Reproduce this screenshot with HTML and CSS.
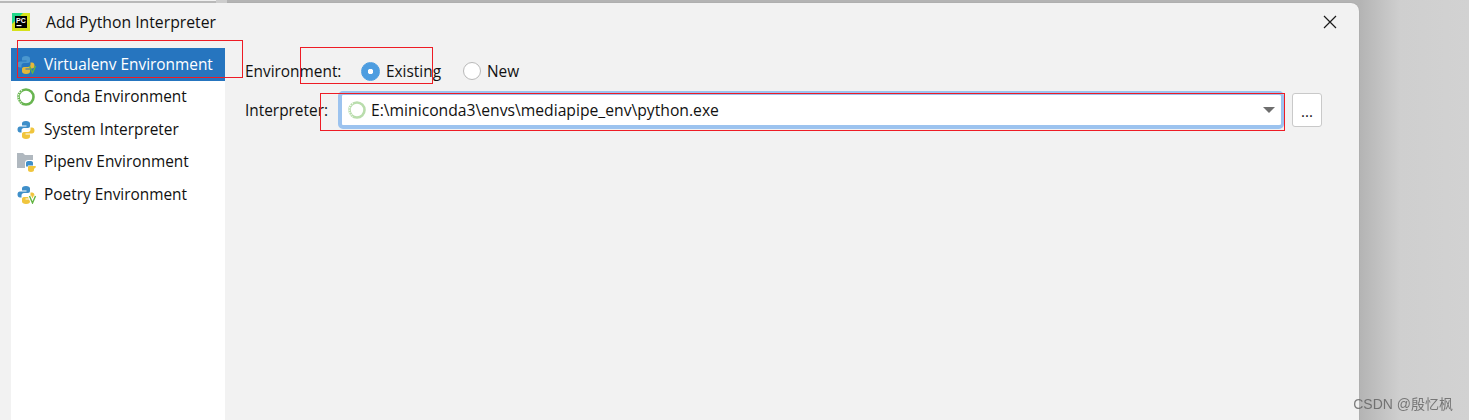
FILE: index.html
```html
<!DOCTYPE html>
<html>

<head>
    <meta charset="UTF-8">
    <title>Add Python Interpreter</title>
    <link rel="stylesheet" href="styles.css">
</head>

<body>
    <svg class="icon-defs">
        <defs>
            <path id="py-blue" d="M9 2C6 2 5 3 5 4.500V6.500H9.500V7.500H3C1.500 7.500 0.500 8.500 0.500 10.500C0.500 12.500 1.500 13.500 3 13.500H4.500V11.500C4.500 10 5.500 9 7 9H11C12.300 9 13 8 13 7V4.500C13 3 11.500 2 9 2Z"/>
            <path id="py-yellow" d="M9 20C12 20 13 19 13 17.500V15.500H8.500V14.500H15C16.500 14.500 17.500 13.500 17.500 11.500C17.500 9.500 16.500 8.500 15 8.500H13.500V10.500C13.500 12 12.500 13 11 13H7C5.700 13 5 14 5 15V17.500C5 19 6.500 20 9 20Z"/>
            <path id="venv-v" d="M12.500 12L15.500 19L18.500 12"/>
        </defs>
    </svg>

    <div class="backdrop">
        <div class="top-strip">
            <div class="strip-light"></div>
            <div class="strip-mid"></div>
        </div>
        <div class="dialog">
            <div class="title-bar">
                <svg class="app-icon" width="18" height="18" viewBox="0 0 18 18">
                    <rect width="18" height="18" fill="#d6e21c"/>
                    <path d="M0 0H11L0 11Z" fill="#21d789"/>
                    <rect x="3" y="3" width="12" height="12" fill="#000"/>
                    <rect x="4.500" y="12" width="5" height="1.200" fill="#fff"/>
                    <text x="4" y="9.500" class="app-icon-text">PC</text>
                </svg>
                <span class="title">Add Python Interpreter</span>
                <svg class="close" width="14" height="14" viewBox="0 0 14 14">
                    <path d="M1 1L13 13M13 1L1 13" stroke="#1a1a1a" stroke-width="1.200" fill="none"/>
                </svg>
            </div>
            <div class="content">
                <ul class="side">
                    <li class="side-item selected">
                        <svg class="icon" width="20" height="20" viewBox="0 0 20 20">
                            <use href="#py-blue" fill="#4a97cf"/>
                            <use href="#py-yellow" fill="#e2b93b"/>
                            <use href="#venv-v" stroke="#62b543" stroke-width="1.400" fill="none"/>
                        </svg>
                        Virtualenv Environment
                    </li>
                    <li class="side-item">
                        <svg class="icon" width="20" height="20" viewBox="0 0 20 20">
                            <circle cx="9" cy="10" r="7.500" stroke="#68b550" stroke-width="2.600" fill="none"/>
                            <path d="M5 3.500A7.500 7.500 0 0 0 5 16.500" stroke="#fff" stroke-width="1.400" stroke-dasharray="1 1.500" fill="none"/>
                        </svg>
                        Conda Environment
                    </li>
                    <li class="side-item">
                        <svg class="icon" width="20" height="20" viewBox="0 0 20 20">
                            <use href="#py-blue" fill="#3f8fc9"/>
                            <use href="#py-yellow" fill="#f0c53d"/>
                        </svg>
                        System Interpreter
                    </li>
                    <li class="side-item">
                        <svg class="icon" width="20" height="20" viewBox="0 0 20 20">
                            <path d="M0 1H6L8 3H16V8H11C9 8 8 9 8 11V16H0Z" fill="#b0b8bf"/>
                            <path d="M9 13V11C9 9.500 10 9 12.500 9S16 9.500 16 11V13.500H11V14.500H9Z" fill="#3f8fc9"/>
                            <path d="M12 14H18.500C19 14 19 16.500 17 16.500V18C17 19.300 16 20 14 20S11 19.300 11 18V15C11 14.500 11.500 14 12 14Z" fill="#f0c53d"/>
                        </svg>
                        Pipenv Environment
                    </li>
                    <li class="side-item">
                        <svg class="icon" width="20" height="20" viewBox="0 0 20 20">
                            <use href="#py-blue" fill="#3f8fc9"/>
                            <use href="#py-yellow" fill="#f0c53d"/>
                            <use href="#venv-v" stroke="#fff" stroke-width="3.400" fill="none"/>
                            <use href="#venv-v" stroke="#62b543" stroke-width="1.400" fill="none"/>
                        </svg>
                        Poetry Environment
                    </li>
                </ul>
                <div class="main">
                    <div class="env-row">
                        <span class="env-label">Environment:</span>
                        <span class="radio checked"></span>
                        <span class="radio-text">Existing</span>
                        <span class="radio"></span>
                        <span class="radio-text">New</span>
                    </div>
                    <div class="interp-row">
                        <span class="interp-label">Interpreter:</span>
                        <div class="combo">
                            <svg class="combo-icon" width="20" height="20" viewBox="0 0 20 20">
                                <circle cx="10" cy="10" r="7.500" stroke="#b9ddac" stroke-width="2.600" fill="none"/>
                                <path d="M6 3.500A7.500 7.500 0 0 0 6 16.500" stroke="#fff" stroke-width="1.400" stroke-dasharray="1 1.500" fill="none"/>
                            </svg>
                            <span class="combo-text">E:\miniconda3\envs\mediapipe_env\python.exe</span>
                            <span class="combo-arrow"></span>
                        </div>
                        <div class="browse">...</div>
                    </div>
                </div>
            </div>
        </div>
    </div>

    <div class="mark mark-side"></div>
    <div class="mark mark-env"></div>
    <div class="mark mark-combo"></div>
    <div class="watermark">CSDN @殷忆枫</div>
</body>

</html>
```

FILE: styles.css
```css
html,
body {
    margin: 0;
    height: 420px;
    overflow: hidden;
}

body {
    font-family: "Open Sans", "Noto Sans CJK SC", sans-serif;
    font-size: 15.4px;
    color: #111;
}

.icon-defs {
    display: none;
}

.backdrop {
    height: 420px;
    background: linear-gradient(to right, #b4b4b4 1360px, #cfcfcf 1400px, #d2d2d2);
}

.top-strip {
    display: flex;
    height: 3px;
}

.strip-light {
    width: 216px;
    background: #f0f0f0;
    border-bottom: 2px solid #b9b9b9;
    box-sizing: border-box;
}

.strip-mid {
    width: 11px;
    background: #cdcdcd;
}

.dialog {
    width: 1359px;
    height: 417px;
    background: #f2f2f2;
    border-top-right-radius: 8px;
    box-shadow: 0 0 1px #888;
}

.title-bar {
    display: flex;
    align-items: center;
    height: 37px;
    padding: 0 22px 0 12px;
}

.app-icon-text {
    font-family: "Liberation Sans", sans-serif;
    font-size: 7px;
    font-weight: bold;
    fill: #fff;
}

.title {
    margin-left: 16px;
    font-size: 15.75px;
}

.close {
    margin-left: auto;
}

.content {
    display: flex;
    height: 380px;
}

.side {
    list-style: none;
    margin: 8px 0 0 11px;
    padding: 0;
    width: 214px;
    background: #fff;
}

.side-item {
    display: flex;
    align-items: center;
    box-sizing: border-box;
    height: 32.5px;
    padding: 0 0 0.5px 6px;
}

.side-item.selected {
    background: #2675bf;
    color: #fff;
}

.icon {
    margin-right: 7px;
}

.main {
    flex: 1;
    padding: 15px 37px 0 20px;
}

.env-row {
    display: flex;
    align-items: center;
    height: 32px;
}

.env-label {
    width: 116px;
}

.radio {
    width: 16px;
    height: 16px;
    border: 1px solid #b9b9b9;
    border-radius: 50%;
    background: #fff;
}

.radio.checked {
    width: 17px;
    height: 17px;
    border-color: #4d9de0;
    background: radial-gradient(circle, #fff 2.5px, #4d9de0 3px);
}

.radio-text {
    margin: 0 22px 0 6px;
}

.interp-row {
    display: flex;
    align-items: center;
    margin-top: 4px;
}

.interp-label {
    width: 93px;
}

.combo {
    flex: 1;
    display: flex;
    align-items: center;
    box-sizing: border-box;
    height: 38px;
    background: #fff;
    border: 4px solid #9cc3ef;
    border-right-width: 3px;
    border-radius: 5px;
    padding: 0 6px 0 5px;
}

.combo-text {
    margin-left: 4px;
    font-size: 15.7px;
}

.combo-arrow {
    margin-left: auto;
    border-left: 6px solid transparent;
    border-right: 6px solid transparent;
    border-top: 6px solid #6e6e6e;
}

.browse {
    width: 28px;
    height: 32px;
    margin-left: 8px;
    background: #fff;
    border: 1px solid #c9c9c9;
    border-radius: 3px;
    text-align: center;
    line-height: 34px;
    font-size: 15px;
}

.mark {
    position: absolute;
    border: 1px solid #ee1c25;
    box-sizing: border-box;
}

.mark-side {
    left: 17px;
    top: 40px;
    width: 226px;
    height: 38px;
}

.mark-env {
    left: 300px;
    top: 47px;
    width: 133px;
    height: 37px;
}

.mark-combo {
    left: 320px;
    top: 93px;
    width: 965px;
    height: 38px;
}

.watermark {
    position: absolute;
    right: 16px;
    bottom: 7px;
    font-family: "Liberation Sans", "Noto Sans CJK SC", sans-serif;
    font-size: 14px;
    color: rgba(80, 80, 80, 0.7);
    filter: blur(0.4px);
}
```
